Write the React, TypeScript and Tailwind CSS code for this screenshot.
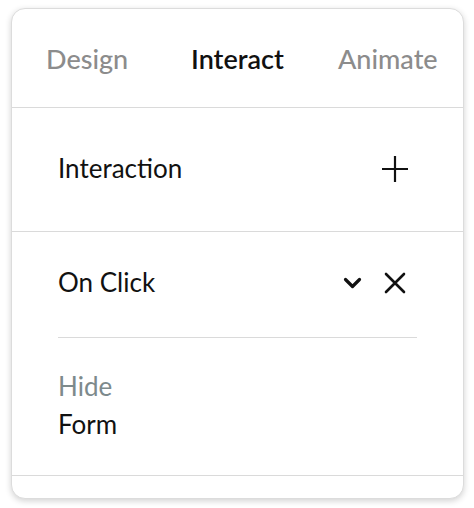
import React from 'react';

const tabs = [
  { label: 'Design', active: false },
  { label: 'Interact', active: true },
  { label: 'Animate', active: false },
];

const PlusIcon = () => (
  <svg width="28" height="28" viewBox="0 0 28 28" fill="none" stroke="#111" strokeWidth="2.2">
    <path d="M14 1v26M1 14h26" />
  </svg>
);

const ChevronIcon = () => (
  <svg width="19" height="12" viewBox="0 0 19 12" fill="none" stroke="#111" strokeWidth="3.2" strokeLinecap="round" strokeLinejoin="round">
    <path d="M2.5 2.5l7 7 7-7" />
  </svg>
);

const CloseIcon = () => (
  <svg width="22" height="22" viewBox="0 0 22 22" fill="none" stroke="#111" strokeWidth="2.6" strokeLinecap="round">
    <path d="M2 2l18 18M20 2L2 20" />
  </svg>
);

const App = () => {
  return (
    <div className="w-[474px] h-[508px] bg-white pt-2 pl-[11px]" style={{ fontFamily: 'Lato, "Open Sans", sans-serif' }}>
      <div className="w-[453px] h-[491px] rounded-[14px] border border-[#dcdcdc] bg-white shadow-[0_2px_6px_rgba(0,0,0,0.18)] overflow-hidden flex flex-col">
        {/* Tabs */}
        <div className="grid grid-cols-3 h-[99px] items-center border-b border-[#dadada] pt-[2px]">
          {tabs.map((tab) => (
            <div
              key={tab.label}
              className={`text-center text-[27px] ${tab.active ? 'font-semibold text-[#111]' : 'font-medium text-[#8c8c8c]'}`}
            >
              {tab.label}
            </div>
          ))}
        </div>

        {/* Interaction */}
        <div className="h-[124px] flex items-center justify-between pl-[46px] pr-[54px] border-b border-[#dadada] pb-[2px]">
          <span className="text-[26px] text-[#111]">Interaction</span>
          <PlusIcon />
        </div>

        {/* On Click */}
        <div className="px-[46px]">
          <div className="h-[106px] flex items-center justify-between border-b border-[#dadada] pr-[11px] pb-[4px]">
            <span className="text-[26px] text-[#111]">On Click</span>
            <div className="flex items-center gap-[22px]">
              <ChevronIcon />
              <CloseIcon />
            </div>
          </div>
          <div className="h-[137px] flex flex-col pt-[29px] leading-[38px] text-[26px]">
            <span className="text-[#7d8a8c]">Hide</span>
            <span className="text-[#111]">Form</span>
          </div>
        </div>

        <div className="border-t border-[#dadada]" />
      </div>
    </div>
  );
};

export default App;
